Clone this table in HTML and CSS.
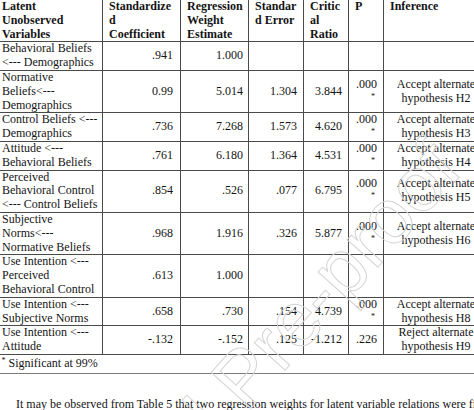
FILE: index.html
```html
<!DOCTYPE html>
<html>
<head>
<meta charset="utf-8">
<link rel="stylesheet" href="styles.css">
</head>
<body>
<div class="page">
  <table class="results">
    <colgroup>
      <col class="c1"><col class="c2"><col class="c3"><col class="c4"><col class="c5"><col class="c6"><col class="c7">
    </colgroup>
    <thead>
      <tr>
        <th class="first">Latent Unobserved Variables</th>
        <th>Standardized Coefficient</th>
        <th class="c3h">Regression Weight Estimate</th>
        <th>Standard Error</th>
        <th>Critical Ratio</th>
        <th>P</th>
        <th>Inference</th>
      </tr>
    </thead>
    <tbody>
      <tr>
        <td class="first">Behavioral Beliefs &lt;--- Demographics</td>
        <td class="num n2">.941</td><td class="num n3">1.000</td><td class="num"></td><td class="num"></td><td class="num"></td><td class="inf"></td>
      </tr>
      <tr>
        <td class="first">Normative Beliefs&lt;--- Demographics</td>
        <td class="num n2">0.99</td><td class="num n3">5.014</td><td class="num">1.304</td><td class="num">3.844</td><td class="num p">.000<br><sup>*</sup></td><td class="inf">Accept alternate hypothesis H2</td>
      </tr>
      <tr>
        <td class="first">Control Beliefs &lt;--- Demographics</td>
        <td class="num n2">.736</td><td class="num n3">7.268</td><td class="num">1.573</td><td class="num">4.620</td><td class="num p">.000<br><sup>*</sup></td><td class="inf">Accept alternate hypothesis H3</td>
      </tr>
      <tr>
        <td class="first">Attitude &lt;--- Behavioral Beliefs</td>
        <td class="num n2">.761</td><td class="num n3">6.180</td><td class="num">1.364</td><td class="num">4.531</td><td class="num p">.000<br><sup>*</sup></td><td class="inf">Accept alternate hypothesis H4</td>
      </tr>
      <tr>
        <td class="first">Perceived Behavioral Control &lt;--- Control Beliefs</td>
        <td class="num n2">.854</td><td class="num n3">.526</td><td class="num">.077</td><td class="num">6.795</td><td class="num p">.000<br><sup>*</sup></td><td class="inf">Accept alternate hypothesis H5</td>
      </tr>
      <tr>
        <td class="first">Subjective Norms&lt;--- Normative Beliefs</td>
        <td class="num n2">.968</td><td class="num n3">1.916</td><td class="num">.326</td><td class="num">5.877</td><td class="num p">.000<br><sup>*</sup></td><td class="inf">Accept alternate hypothesis H6</td>
      </tr>
      <tr>
        <td class="first">Use Intention &lt;--- Perceived Behavioral Control</td>
        <td class="num n2">.613</td><td class="num n3">1.000</td><td class="num"></td><td class="num"></td><td class="num"></td><td class="inf"></td>
      </tr>
      <tr>
        <td class="first">Use Intention &lt;--- Subjective Norms</td>
        <td class="num n2">.658</td><td class="num n3">.730</td><td class="num">.154</td><td class="num">4.739</td><td class="num p">.000<br><sup>*</sup></td><td class="inf">Accept alternate hypothesis H8</td>
      </tr>
      <tr>
        <td class="first">Use Intention &lt;--- Attitude</td>
        <td class="num n2">-.132</td><td class="num n3">-.152</td><td class="num">.125</td><td class="num">-1.212</td><td class="num p">.226</td><td class="inf">Reject alternate hypothesis H9</td>
      </tr>
      <tr class="foot">
        <td colspan="7"><sup>*</sup> Significant at 99%</td>
      </tr>
    </tbody>
  </table>
  <p class="body-text">It may be observed from Table 5 that two regression weights for latent variable relations were fixed to 1.</p>
  <div class="watermark">Journal Pre-proof</div>
</div>
</body>
</html>
```
FILE: styles.css
```css
html, body {
  margin: 0;
  padding: 0;
  background: #ffffff;
}
body {
  width: 474px;
  height: 410px;
  overflow: hidden;
  font-family: "Liberation Serif", "Times New Roman", serif;
  color: #141414;
}
.page {
  position: relative;
  width: 474px;
  height: 410px;
  overflow: hidden;
}
.results {
  border-collapse: collapse;
  table-layout: fixed;
  width: 489px;
  margin-top: -1px;
  margin-left: -1px;
  font-size: 12px;
  line-height: 13.8px;
}
.c1 { width: 103px; }
.c2 { width: 78px; }
.c3 { width: 68px; }
.c4 { width: 55px; }
.c5 { width: 45px; }
.c6 { width: 35px; }
.c7 { width: 105px; }
.results th,
.results td {
  border: 1px solid #4a4a4a;
  padding: 0 6px;
  overflow-wrap: anywhere;
}
.results th {
  font-weight: bold;
  text-align: left;
  vertical-align: top;
}
.results th.c3h { padding-right: 5px; }
.results td {
  vertical-align: middle;
}
.results .first {
  padding-left: 2px;
  padding-right: 4px;
  text-align: left;
}
.results td.num {
  text-align: right;
}
.results td.n2 { padding-right: 7px; }
.results td.n3 { padding-right: 5px; }
.results td.p sup {
  font-size: 8px;
  line-height: 0;
  vertical-align: 3px;
  margin-right: 2px;
}
.results td.inf {
  text-align: center;
  padding: 0 4px;
}
.results tr.foot td {
  border-left: none;
  border-right: none;
  border-bottom: 1px solid #7a7a7a;
  padding: 2px 0 2px 2px;
  text-align: left;
}
.results tr.foot sup {
  font-size: 8px;
  line-height: 0;
  vertical-align: 4px;
}
.body-text {
  margin: 23px 0 0 16px;
  font-size: 12px;
  line-height: 14px;
  white-space: nowrap;
}
.watermark {
  position: absolute;
  left: 12px;
  top: 575px;
  font-family: "Liberation Sans", Arial, sans-serif;
  font-size: 78px;
  line-height: 1;
  white-space: nowrap;
  color: transparent;
  -webkit-text-stroke: 1px #d4d4d4;
  transform-origin: 0 0;
  transform: rotate(-48deg);
  pointer-events: none;
}
```
